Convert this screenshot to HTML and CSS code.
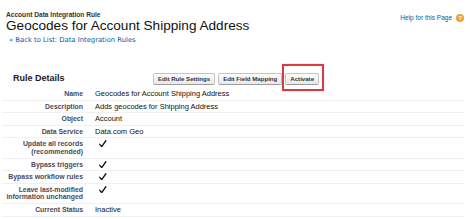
FILE: index.html
```html
<!DOCTYPE html>
<html>
	<head>
		<meta charset="UTF-8">
		<title>Geocodes for Account Shipping Address</title>
		<link rel="stylesheet" href="styles.css">
	</head>
	<body>
		<div class="wrap">
			<div class="top">
				<div class="titles">
					<div class="type">Account Data Integration Rule</div>
					<h1>Geocodes for Account Shipping Address</h1>
					<a class="back" href="#">« Back to List: Data Integration Rules</a>
				</div>
				<a class="help" href="#">Help for this Page <span class="q">?</span></a>
			</div>

			<div class="block">
				<div class="bar">
					<h2>Rule Details</h2>
					<div class="btns">
						<button>Edit Rule Settings</button>
						<button>Edit Field Mapping</button>
						<span class="mark"><button>Activate</button></span>
					</div>
				</div>
				<div class="details">
					<div class="lbl">Name</div>
					<div class="val">Geocodes for Account Shipping Address</div>
					<div class="lbl">Description</div>
					<div class="val">Adds geocodes for Shipping Address</div>
					<div class="lbl">Object</div>
					<div class="val">Account</div>
					<div class="lbl">Data Service</div>
					<div class="val">Data.com Geo</div>
					<div class="lbl">Update all records<br>(recommended)</div>
					<div class="val"><svg class="chk" viewBox="0 0 8 8"><path d="M0.8 4.6 L2.9 7 L7.3 0.8"/></svg></div>
					<div class="lbl">Bypass triggers</div>
					<div class="val"><svg class="chk" viewBox="0 0 8 8"><path d="M0.8 4.6 L2.9 7 L7.3 0.8"/></svg></div>
					<div class="lbl">Bypass workflow rules</div>
					<div class="val"><svg class="chk" viewBox="0 0 8 8"><path d="M0.8 4.6 L2.9 7 L7.3 0.8"/></svg></div>
					<div class="lbl">Leave last-modified<br>information unchanged</div>
					<div class="val"><svg class="chk" viewBox="0 0 8 8"><path d="M0.8 4.6 L2.9 7 L7.3 0.8"/></svg></div>
					<div class="lbl">Current Status</div>
					<div class="val">Inactive</div>
				</div>
			</div>
		</div>
	</body>
</html>
```

FILE: styles.css
```css
body {
	margin: 0;
	background: #FFF;
	font-family: "Liberation Sans", Arial, sans-serif;
	color: #000;
}

.wrap {
	padding: 11px 10px 0 2px;
}

.top {
	display: flex;
	justify-content: space-between;
	align-items: flex-start;
	padding-left: 4px;
}

.top .type {
	font-size: 6.6px;
	line-height: 7px;
	font-weight: bold;
	color: #333;
}

.top h1 {
	margin: 0;
	font-size: 13.6px;
	line-height: 16px;
	font-weight: normal;
	color: #111;
}

.top .back {
	display: block;
	margin: 2px 0 0 3px;
	font: 6.8px/8px "DejaVu Sans", Verdana, sans-serif;
	color: #015BA7;
	text-decoration: none;
}

.help {
	display: flex;
	align-items: center;
	gap: 4px;
	margin-top: 2px;
	height: 9px;
	font-size: 6.5px;
	color: #015BA7;
	text-decoration: none;
}

.help .q {
	width: 8px;
	height: 8px;
	border-radius: 50%;
	background: #F0A030;
	color: #FFF;
	font-size: 6px;
	font-weight: bold;
	line-height: 8px;
	text-align: center;
}

.block {
	margin-top: 21px;
}

.bar {
	display: flex;
	align-items: flex-end;
	height: 20px;
	padding-bottom: 3px;
}

.bar h2 {
	width: 140px;
	margin: 0 0 0 11px;
	align-self: center;
	padding-top: 6px;
	font-size: 9px;
	line-height: 11px;
	color: #222;
}

.btns {
	display: flex;
	gap: 3px;
}

.btns button {
	height: 12px;
	padding: 0 4px;
	border: 1px solid #C4C4C4;
	border-bottom-color: #9E9E9E;
	border-radius: 2px;
	background: linear-gradient(#FDFDFD, #E8E8E8);
	font: bold 6.1px/10px "Liberation Sans", Arial, sans-serif;
	color: #333;
}

.mark {
	position: relative;
	display: flex;
}

.mark::after {
	content: "";
	position: absolute;
	left: -3px;
	top: -9px;
	width: 42px;
	height: 27px;
	box-sizing: border-box;
	border: 2px solid #DA3A40;
	box-shadow: 0 0 1px rgba(0, 0, 0, 0.3);
}

.details {
	display: grid;
	grid-template-columns: 87px 1fr;
}

.details .lbl,
.details .val {
	padding: 2px 0;
	border-bottom: 1px solid #F0F0F0;
}

.details .lbl {
	padding-right: 6px;
	text-align: right;
	font-size: 6.9px;
	line-height: 7.6px;
	font-weight: bold;
	color: #4A4A56;
}

.details .val {
	padding-left: 6px;
	font-size: 7.5px;
	line-height: 7.6px;
	color: #111;
}

.chk {
	display: block;
	width: 7.5px;
	height: 7.5px;
	margin-left: 4px;
	fill: none;
	stroke: #111;
	stroke-width: 1.4;
	stroke-linecap: round;
	stroke-linejoin: round;
}
```
